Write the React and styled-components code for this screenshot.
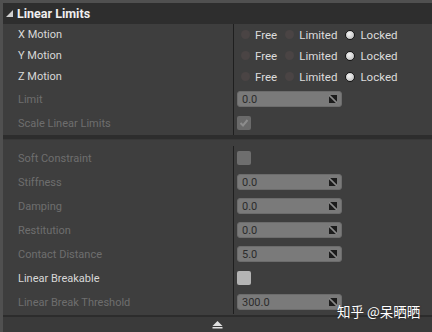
import React from "react";
import styled, { createGlobalStyle } from "styled-components";

const Global = createGlobalStyle`
  body {
    margin: 0;
    background: #3e3e3e;
    font-family: Roboto, "Liberation Sans", sans-serif;
  }
`;

const Frame = styled.div`
  position: relative;
  width: 432px;
  height: 332px;
  box-sizing: border-box;
  padding: 3px 0 0 3px;
  background: #505050;
  overflow: hidden;
`;

const Panel = styled.div`
  display: flex;
  flex-direction: column;
  height: 100%;
  background: #3e3e3e;
`;

const Header = styled.div`
  display: flex;
  align-items: center;
  gap: 4px;
  height: 21px;
  padding-left: 3px;
  background: #2e2e2e;
  color: #f0f0f0;
  font-size: 12.5px;
  font-weight: bold;
`;

const Section = styled.div`
  display: flex;
  flex-direction: column;
`;

const Separator = styled.div`
  height: 4px;
  margin-bottom: 6px;
  background: #2d2d2d;
  border-bottom: 1px solid #383838;
`;

const Row = styled.div`
  display: flex;
  height: ${(p) => p.h || 24}px;
`;

const Label = styled.div`
  display: flex;
  align-items: center;
  width: 215px;
  padding-left: 15px;
  border-right: 1px solid #1f1f1f;
  color: ${(p) => (p.dim ? "#6e6e6e" : "#d8d8d8")};
  font-size: 11px;
`;

const Value = styled.div`
  display: flex;
  align-items: center;
  padding-left: 3px;
`;

const NumBox = styled.div`
  display: flex;
  align-items: center;
  justify-content: space-between;
  width: 105px;
  height: 16px;
  box-sizing: border-box;
  padding: 0 4px;
  background: #7a7a7a;
  border: 1px solid #6c6c6c;
  border-radius: 3px;
  color: #2c2c2c;
  font-size: 11px;
`;

const Check = styled.div`
  display: flex;
  align-items: center;
  justify-content: center;
  width: 14px;
  height: 14px;
  border-radius: 2px;
  background: ${(p) => p.bg};
`;

const Radio = styled.span`
  display: inline-block;
  width: ${(p) => (p.on ? 10 : 9)}px;
  height: ${(p) => (p.on ? 10 : 9)}px;
  border-radius: 50%;
  margin-left: ${(p) => p.ml}px;
  box-sizing: border-box;
  background: ${(p) =>
    p.on ? "radial-gradient(circle at 40% 35%, #f4f4f4, #b4b4b4)" : "#4a4444"};
  border: ${(p) => (p.on ? "1px solid #151515" : "none")};
`;

const RadioText = styled.span`
  color: #dcdcdc;
  font-size: 11.5px;
  margin-left: 5px;
`;

const Footer = styled.div`
  display: flex;
  align-items: center;
  justify-content: center;
  flex: 1;
  margin-top: 1px;
  border-top: 2px solid #2c2c2c;
  background: #3a3a3a;
`;

const Watermark = styled.div`
  position: absolute;
  left: 337px;
  top: 301px;
  color: #ffffff;
  font-family: "Noto Sans CJK SC", sans-serif;
  font-size: 13.5px;
  text-shadow: 0 0 2px rgba(0, 0, 0, 0.4);
`;

const Spin = () => (
  <svg width="8" height="8" viewBox="0 0 8 8">
    <rect width="8" height="8" fill="#1c1c1c" />
    <path d="M0 0 L8 8" stroke="#8a8a8a" strokeWidth="1.6" />
  </svg>
);

const Num = ({ v }) => (
  <NumBox>
    <span>{v}</span>
    <Spin />
  </NumBox>
);

const Motion = ({ name }) => (
  <Row h={21}>
    <Label>{name}</Label>
    <Value>
      <Radio ml={4} />
      <RadioText>Free</RadioText>
      <Radio ml={8} />
      <RadioText>Limited</RadioText>
      <Radio on ml={8} />
      <RadioText>Locked</RadioText>
    </Value>
  </Row>
);

export default function App() {
  return (
    <>
      <Global />
      <Frame>
        <Panel>
          <Header>
            <svg width="7" height="7" viewBox="0 0 7 7">
              <path d="M7 0 L7 7 L0 7 Z" fill="#d0d0d0" />
            </svg>
            Linear Limits
          </Header>
          <Section>
            <Motion name="X Motion" />
            <Motion name="Y Motion" />
            <Motion name="Z Motion" />
            <Row>
              <Label dim>Limit</Label>
              <Value>
                <Num v="0.0" />
              </Value>
            </Row>
            <Row>
              <Label dim>Scale Linear Limits</Label>
              <Value>
                <Check bg="#6a6a6a">
                  <svg width="10" height="10" viewBox="0 0 10 10">
                    <path d="M1.5 5 L4 7.5 L8.5 2" stroke="#8c8c8c" strokeWidth="2" fill="none" />
                  </svg>
                </Check>
              </Value>
            </Row>
          </Section>
          <Separator />
          <Section>
            <Row>
              <Label dim>Soft Constraint</Label>
              <Value>
                <Check bg="#6e6e6e" />
              </Value>
            </Row>
            <Row>
              <Label dim>Stiffness</Label>
              <Value>
                <Num v="0.0" />
              </Value>
            </Row>
            <Row>
              <Label dim>Damping</Label>
              <Value>
                <Num v="0.0" />
              </Value>
            </Row>
            <Row>
              <Label dim>Restitution</Label>
              <Value>
                <Num v="0.0" />
              </Value>
            </Row>
            <Row>
              <Label dim>Contact Distance</Label>
              <Value>
                <Num v="5.0" />
              </Value>
            </Row>
            <Row>
              <Label>Linear Breakable</Label>
              <Value>
                <Check bg="#b4b4b4" />
              </Value>
            </Row>
            <Row>
              <Label dim>Linear Break Threshold</Label>
              <Value>
                <Num v="300.0" />
              </Value>
            </Row>
          </Section>
          <Footer>
            <svg width="11" height="8" viewBox="0 0 11 8">
              <path d="M5.5 0 L10.5 5 L0.5 5 Z" fill="#e0e0e0" />
              <rect x="0.5" y="6" width="10" height="1.5" fill="#e0e0e0" />
            </svg>
          </Footer>
        </Panel>
        <Watermark>知乎 @呆晒晒</Watermark>
      </Frame>
    </>
  );
}
